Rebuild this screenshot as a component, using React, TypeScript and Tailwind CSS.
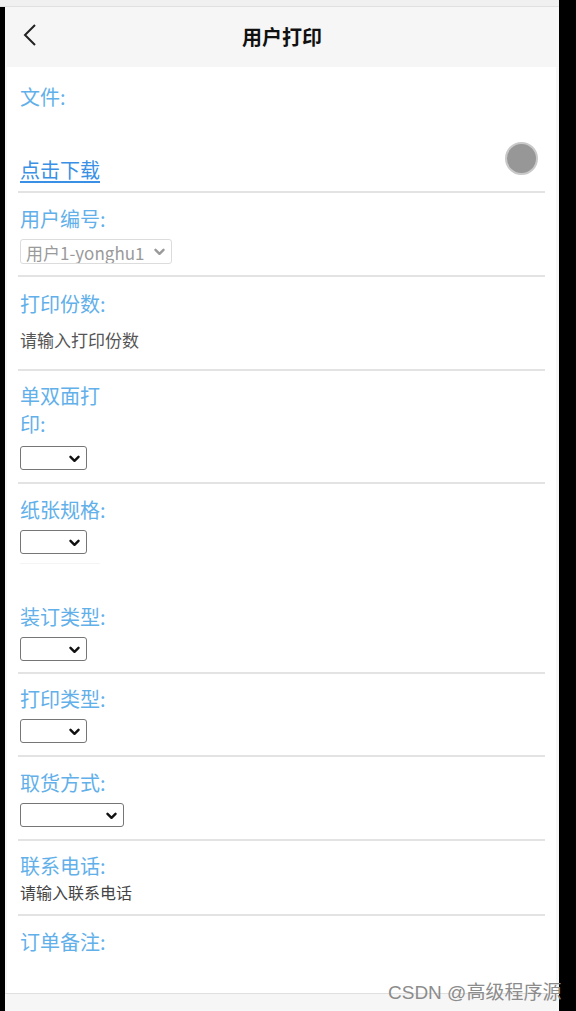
import React from 'react';

const FONT = { fontFamily: '"Noto Sans CJK SC", "Noto Sans", sans-serif' };

function Chevron({ color = '#111' }: { color?: string }) {
  return (
    <svg width="11" height="8" viewBox="0 0 11 8" className="pointer-events-none absolute right-[7px] top-1/2 -translate-y-1/2">
      <path d="M1.5 1.8 L5.5 5.8 L9.5 1.8" fill="none" stroke={color} strokeWidth="2.4" strokeLinecap="round" strokeLinejoin="round" />
    </svg>
  );
}

function Select({ width, value, disabled }: { width: string; value?: string; disabled?: boolean }) {
  return (
    <div className={`relative ${width}`}>
      <select
        disabled={disabled}
        defaultValue=""
        className={
          disabled
            ? 'h-[25px] w-full appearance-none rounded-[3px] border border-[#dcdcdc] bg-white pl-[5px] text-[17px] text-[#9a9a9a] outline-none'
            : 'h-[24px] w-full appearance-none rounded-[3px] border border-[#767676] bg-white outline-none'
        }
        style={FONT}
      >
        <option value="">{value ?? ''}</option>
      </select>
      <Chevron color={disabled ? '#9a9a9a' : '#111'} />
    </div>
  );
}

function Label({ children }: { children: React.ReactNode }) {
  return <div className="w-[96px] text-[20px] leading-[28px] text-[#62b0ea]">{children}</div>;
}

function Row({ children, className = '', divider = true }: { children: React.ReactNode; className?: string; divider?: boolean }) {
  return (
    <div className={`mx-[11px] px-[2px] ${divider ? 'border-b-2 border-[#e3e3e3]' : ''} ${className}`}>
      {children}
    </div>
  );
}

export default function App() {
  return (
    <div className="relative h-[1011px] w-[576px] overflow-hidden bg-black" style={FONT}>
      <div className="h-[7px] w-[559px] border-b border-[#e0e0e0] bg-[#f0f0f0]" />
      <div className="ml-[5px] flex h-[1004px] w-[554px] flex-col bg-[#f6f6f6]">
        <header className="relative flex h-[60px] items-center justify-center">
          <svg width="16" height="24" viewBox="0 0 16 24" className="absolute left-[17px] top-[16px]">
            <path d="M13 2 L3 12 L13 22" fill="none" stroke="#222" strokeWidth="2" strokeLinejoin="miter" />
          </svg>
          <h1 className="text-[20px] font-bold text-[#111]">用户打印</h1>
        </header>

        <main className="ml-[2px] mr-[3px] flex-1 bg-white">
          <Row className="pt-[16px] pb-[7px]">
            <Label>文件:</Label>
            <div className="mt-[45px] flex items-start justify-between">
              <a className="text-[20px] leading-[28px] text-[#3a90e4] underline underline-offset-[3px]" href="#">
                点击下载
              </a>
              <div className="mr-[5px] -mt-[14px] h-[33px] w-[33px] rounded-full border-2 border-[#c9c9c9] bg-[#979797]" />
            </div>
          </Row>

          <Row className="pt-[12px] pb-[10px]">
            <Label>用户编号:</Label>
            <div className="mt-[6px]">
              <Select width="w-[152px]" value="用户1-yonghu1" disabled />
            </div>
          </Row>

          <Row className="pt-[13px] pb-[14px]">
            <Label>打印份数:</Label>
            <input
              className="mt-[5px] h-[32px] w-full text-[17px] text-[#555] outline-none placeholder:text-[#555]"
              placeholder="请输入打印份数"
              style={FONT}
            />
          </Row>

          <Row className="pt-[11px] pb-[11px]">
            <Label>单双面打印:</Label>
            <div className="mt-[8px]">
              <Select width="w-[67px]" />
            </div>
          </Row>

          <Row className="pt-[12px] pb-[31px]" divider={false}>
            <Label>纸张规格:</Label>
            <div className="mt-[6px]">
              <Select width="w-[67px]" />
            </div>
            <div className="mt-[8px] h-px w-[80px] bg-[#f4f4f4]" />
          </Row>

          <Row className="pt-[8px] pb-[10px]">
            <Label>装订类型:</Label>
            <div className="mt-[6px]">
              <Select width="w-[67px]" />
            </div>
          </Row>

          <Row className="pt-[11px] pb-[11px]">
            <Label>打印类型:</Label>
            <div className="mt-[6px]">
              <Select width="w-[67px]" />
            </div>
          </Row>

          <Row className="pt-[12px] pb-[11px]">
            <Label>取货方式:</Label>
            <div className="mt-[6px]">
              <Select width="w-[104px]" />
            </div>
          </Row>

          <Row className="pt-[11px] pb-[10px]">
            <Label>联系电话:</Label>
            <input
              className="h-[24px] w-full text-[16px] text-[#444] outline-none placeholder:text-[#444]"
              placeholder="请输入联系电话"
              style={FONT}
            />
          </Row>

          <Row className="pt-[12px]" divider={false}>
            <Label>订单备注:</Label>
          </Row>
        </main>

        <div className="h-[18px] border-t border-[#e0e0e0] bg-[#f6f6f6]" />
      </div>

      <div className="absolute left-[388px] top-[980px] text-[19px] leading-[26px] text-[#8c8c8c]" style={{ fontFamily: '"Liberation Sans", "Noto Sans CJK SC", sans-serif' }}>
        CSDN @高级程序源
      </div>
    </div>
  );
}
